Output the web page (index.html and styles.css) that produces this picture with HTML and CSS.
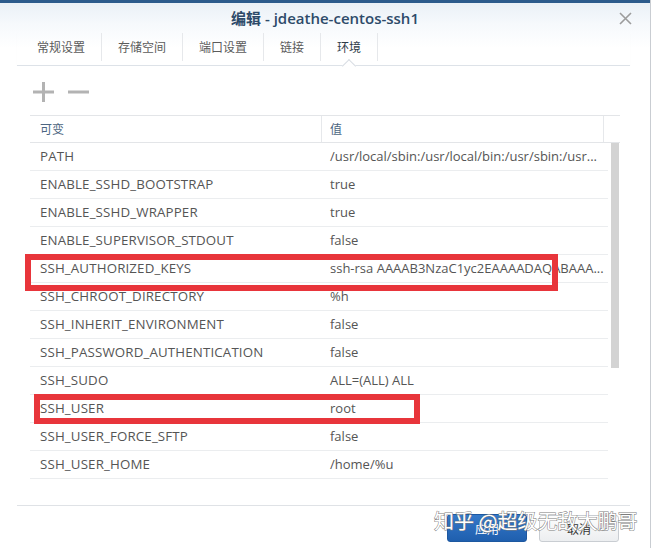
FILE: index.html
```html
<!DOCTYPE html>
<html lang="zh">
<head>
<meta charset="utf-8">
<title>编辑 - jdeathe-centos-ssh1</title>
<link rel="stylesheet" href="styles.css">
</head>
<body>
<div class="win">
  <div class="topbar"></div>
  <header class="titlebar">
    <span></span>
    <h1 class="title">编辑 - jdeathe-centos-ssh1</h1>
    <span class="close"><svg width="13" height="13" viewBox="0 0 13 13"><path d="M1 1L12 12M12 1L1 12" stroke="#9c9c9c" stroke-width="1.6" fill="none"/></svg></span>
  </header>
  <nav class="tabs">
    <div class="tab">常规设置</div>
    <div class="tab">存储空间</div>
    <div class="tab">端口设置</div>
    <div class="tab">链接</div>
    <div class="tab active">环境</div>
  </nav>
  <div class="toolbar">
    <svg class="tool" width="21" height="20" viewBox="0 0 21 20"><path d="M10.5 0V20M0 10H21" stroke="#b3b3b3" stroke-width="3" fill="none"/></svg>
    <svg class="tool" width="21" height="20" viewBox="0 0 21 20"><path d="M0 10H21" stroke="#b3b3b3" stroke-width="3" fill="none"/></svg>
  </div>
  <div class="grid">
    <div class="thead">
      <div class="th c1">可变</div>
      <div class="th c2">值</div>
      <div class="th c3"></div>
    </div>
    <div class="bodywrap">
      <div class="tbody">
        <div class="row"><div class="cell c1">PATH</div><div class="cell c2">/usr/local/sbin:/usr/local/bin:/usr/sbin:/usr...</div></div>
        <div class="row"><div class="cell c1">ENABLE_SSHD_BOOTSTRAP</div><div class="cell c2">true</div></div>
        <div class="row"><div class="cell c1">ENABLE_SSHD_WRAPPER</div><div class="cell c2">true</div></div>
        <div class="row"><div class="cell c1">ENABLE_SUPERVISOR_STDOUT</div><div class="cell c2">false</div></div>
        <div class="row"><div class="cell c1">SSH_AUTHORIZED_KEYS</div><div class="cell c2">ssh-rsa AAAAB3NzaC1yc2EAAAADAQABAAA...</div></div>
        <div class="row"><div class="cell c1">SSH_CHROOT_DIRECTORY</div><div class="cell c2">%h</div></div>
        <div class="row"><div class="cell c1">SSH_INHERIT_ENVIRONMENT</div><div class="cell c2">false</div></div>
        <div class="row"><div class="cell c1">SSH_PASSWORD_AUTHENTICATION</div><div class="cell c2">false</div></div>
        <div class="row"><div class="cell c1">SSH_SUDO</div><div class="cell c2">ALL=(ALL) ALL</div></div>
        <div class="row"><div class="cell c1">SSH_USER</div><div class="cell c2">root</div></div>
        <div class="row"><div class="cell c1">SSH_USER_FORCE_SFTP</div><div class="cell c2">false</div></div>
        <div class="row"><div class="cell c1">SSH_USER_HOME</div><div class="cell c2">/home/%u</div></div>
      </div>
      <div class="scroll"><div class="thumb"></div></div>
    </div>
  </div>
  <footer class="footer">
    <button class="btn primary">应用</button>
    <button class="btn">取消</button>
  </footer>
  <div class="hl hl1"></div>
  <div class="hl hl2"></div>
  <div class="watermark">知乎 @超级无敌大鹏哥</div>
</div>
</body>
</html>
```

FILE: styles.css
```css
* { box-sizing: border-box; }
html, body { margin: 0; padding: 0; background: #fff; }
body {
  font-family: "Open Sans", "Noto Sans CJK SC", sans-serif;
  width: 652px;
  height: 548px;
  overflow: hidden;
}
.win {
  position: relative;
  width: 651px;
  height: 548px;
  border-right: 1px solid #c9cdd2;
  background: linear-gradient(#e8eff6 0px, #f6f9fc 24px, #ffffff 48px);
  overflow: hidden;
}
.topbar { height: 3px; background: #2c5b8c; }
.titlebar {
  height: 30px;
  display: grid;
  grid-template-columns: 1fr auto 1fr;
  align-items: center;
}
.title {
  margin: 0;
  font-size: 15px;
  font-weight: 600;
  color: #2d4a69;
  line-height: 30px;
  font-family: "Open Sans", "Noto Sans CJK SC", sans-serif;
}
.close {
  justify-self: end;
  margin-right: 18px;
  display: flex;
  margin-top: 1px;
}
.tabs {
  display: flex;
  margin: 0 20px 0 17px;
  padding: 0 0 4px 4px;
  border-bottom: 1px solid #dde2e8;
  box-shadow: 0 1px 1px rgba(0,0,0,0.03);
}
.tab {
  position: relative;
  height: 28px;
  line-height: 28px;
  padding: 0 16px;
  border-right: 1px solid #e6e8eb;
  font-size: 12px;
  color: #5b5b5b;
  font-family: "Noto Sans CJK SC", sans-serif;
}
.tab.active { color: #2e3a48; }
.tab.active::after {
  content: "";
  position: absolute;
  left: calc(50% - 5px);
  top: 28px;
  width: 9px;
  height: 9px;
  background: #fff;
  border-top: 1px solid #d8dde3;
  border-left: 1px solid #d8dde3;
  transform: rotate(45deg);
}
.toolbar {
  display: flex;
  gap: 14px;
  padding: 16px 0 13px 33px;
  height: 49px;
  background: #fff;
}
.grid {
  margin-left: 30px;
  width: 590px;
  background: #fff;
}
.thead {
  display: flex;
  height: 28px;
  border-top: 1px solid #e3e5e8;
  border-bottom: 1px solid #e3e5e8;
}
.th {
  font-size: 12px;
  line-height: 26px;
  color: #4d6682;
  font-family: "Noto Sans CJK SC", sans-serif;
}
.th.c1 { width: 292px; padding-left: 10px; border-right: 1px solid #e6e8eb; }
.th.c2 { width: 282px; padding-left: 8px; border-right: 1px solid #e6e8eb; }
.th.c3 { flex: 1; }
.bodywrap {
  display: flex;
  height: 362px;
}
.tbody { width: 578px; }
.row {
  display: flex;
  height: 28px;
  border-bottom: 1px solid #ebedef;
}
.cell {
  font-size: 13.3px;
  line-height: 27px;
  color: #555;
  white-space: nowrap;
  overflow: hidden;
}
.cell.c1 { width: 292px; padding-left: 10px; letter-spacing: 0.15px; }
.cell.c2 { width: 286px; padding-left: 8px; font-size: 13px; }
.scroll { padding-left: 3px; }
.thumb {
  width: 8px;
  height: 225px;
  background: #d3d3d3;
}
.footer {
  margin: 0 20px 0 17px;
  border-top: 1px solid #dfe2e6;
  display: flex;
  justify-content: flex-end;
  align-items: flex-start;
  gap: 12px;
  padding: 8px 11px 0 0;
  background: #fff;
  height: 43px;
}
.btn {
  width: 80px;
  height: 28px;
  border-radius: 3px;
  font-size: 12px;
  font-family: "Noto Sans CJK SC", sans-serif;
  padding: 0;
}
.btn.primary {
  background: linear-gradient(#3478c9, #1f5fae);
  border: 1px solid #1d58a0;
  color: #fff;
}
.btn:not(.primary) {
  margin-top: 1px;
  height: 27px;
  background: linear-gradient(#fdfdfd, #eceef0);
  border: 1px solid #c9cdd2;
  color: #333;
}
.hl {
  position: absolute;
  border: 6px solid #e8353b;
}
.hl1 { left: 25px; top: 254px; width: 533px; height: 37px; }
.hl2 { left: 34px; top: 394px; width: 386px; height: 30px; }
.watermark {
  position: absolute;
  left: 434px;
  top: 507px;
  font-size: 20px;
  line-height: 28px;
  color: #fff;
  font-family: "Noto Sans CJK SC", sans-serif;
  -webkit-text-stroke: 1px #7d7d7d;
  paint-order: stroke fill;
  white-space: nowrap;
}
```
